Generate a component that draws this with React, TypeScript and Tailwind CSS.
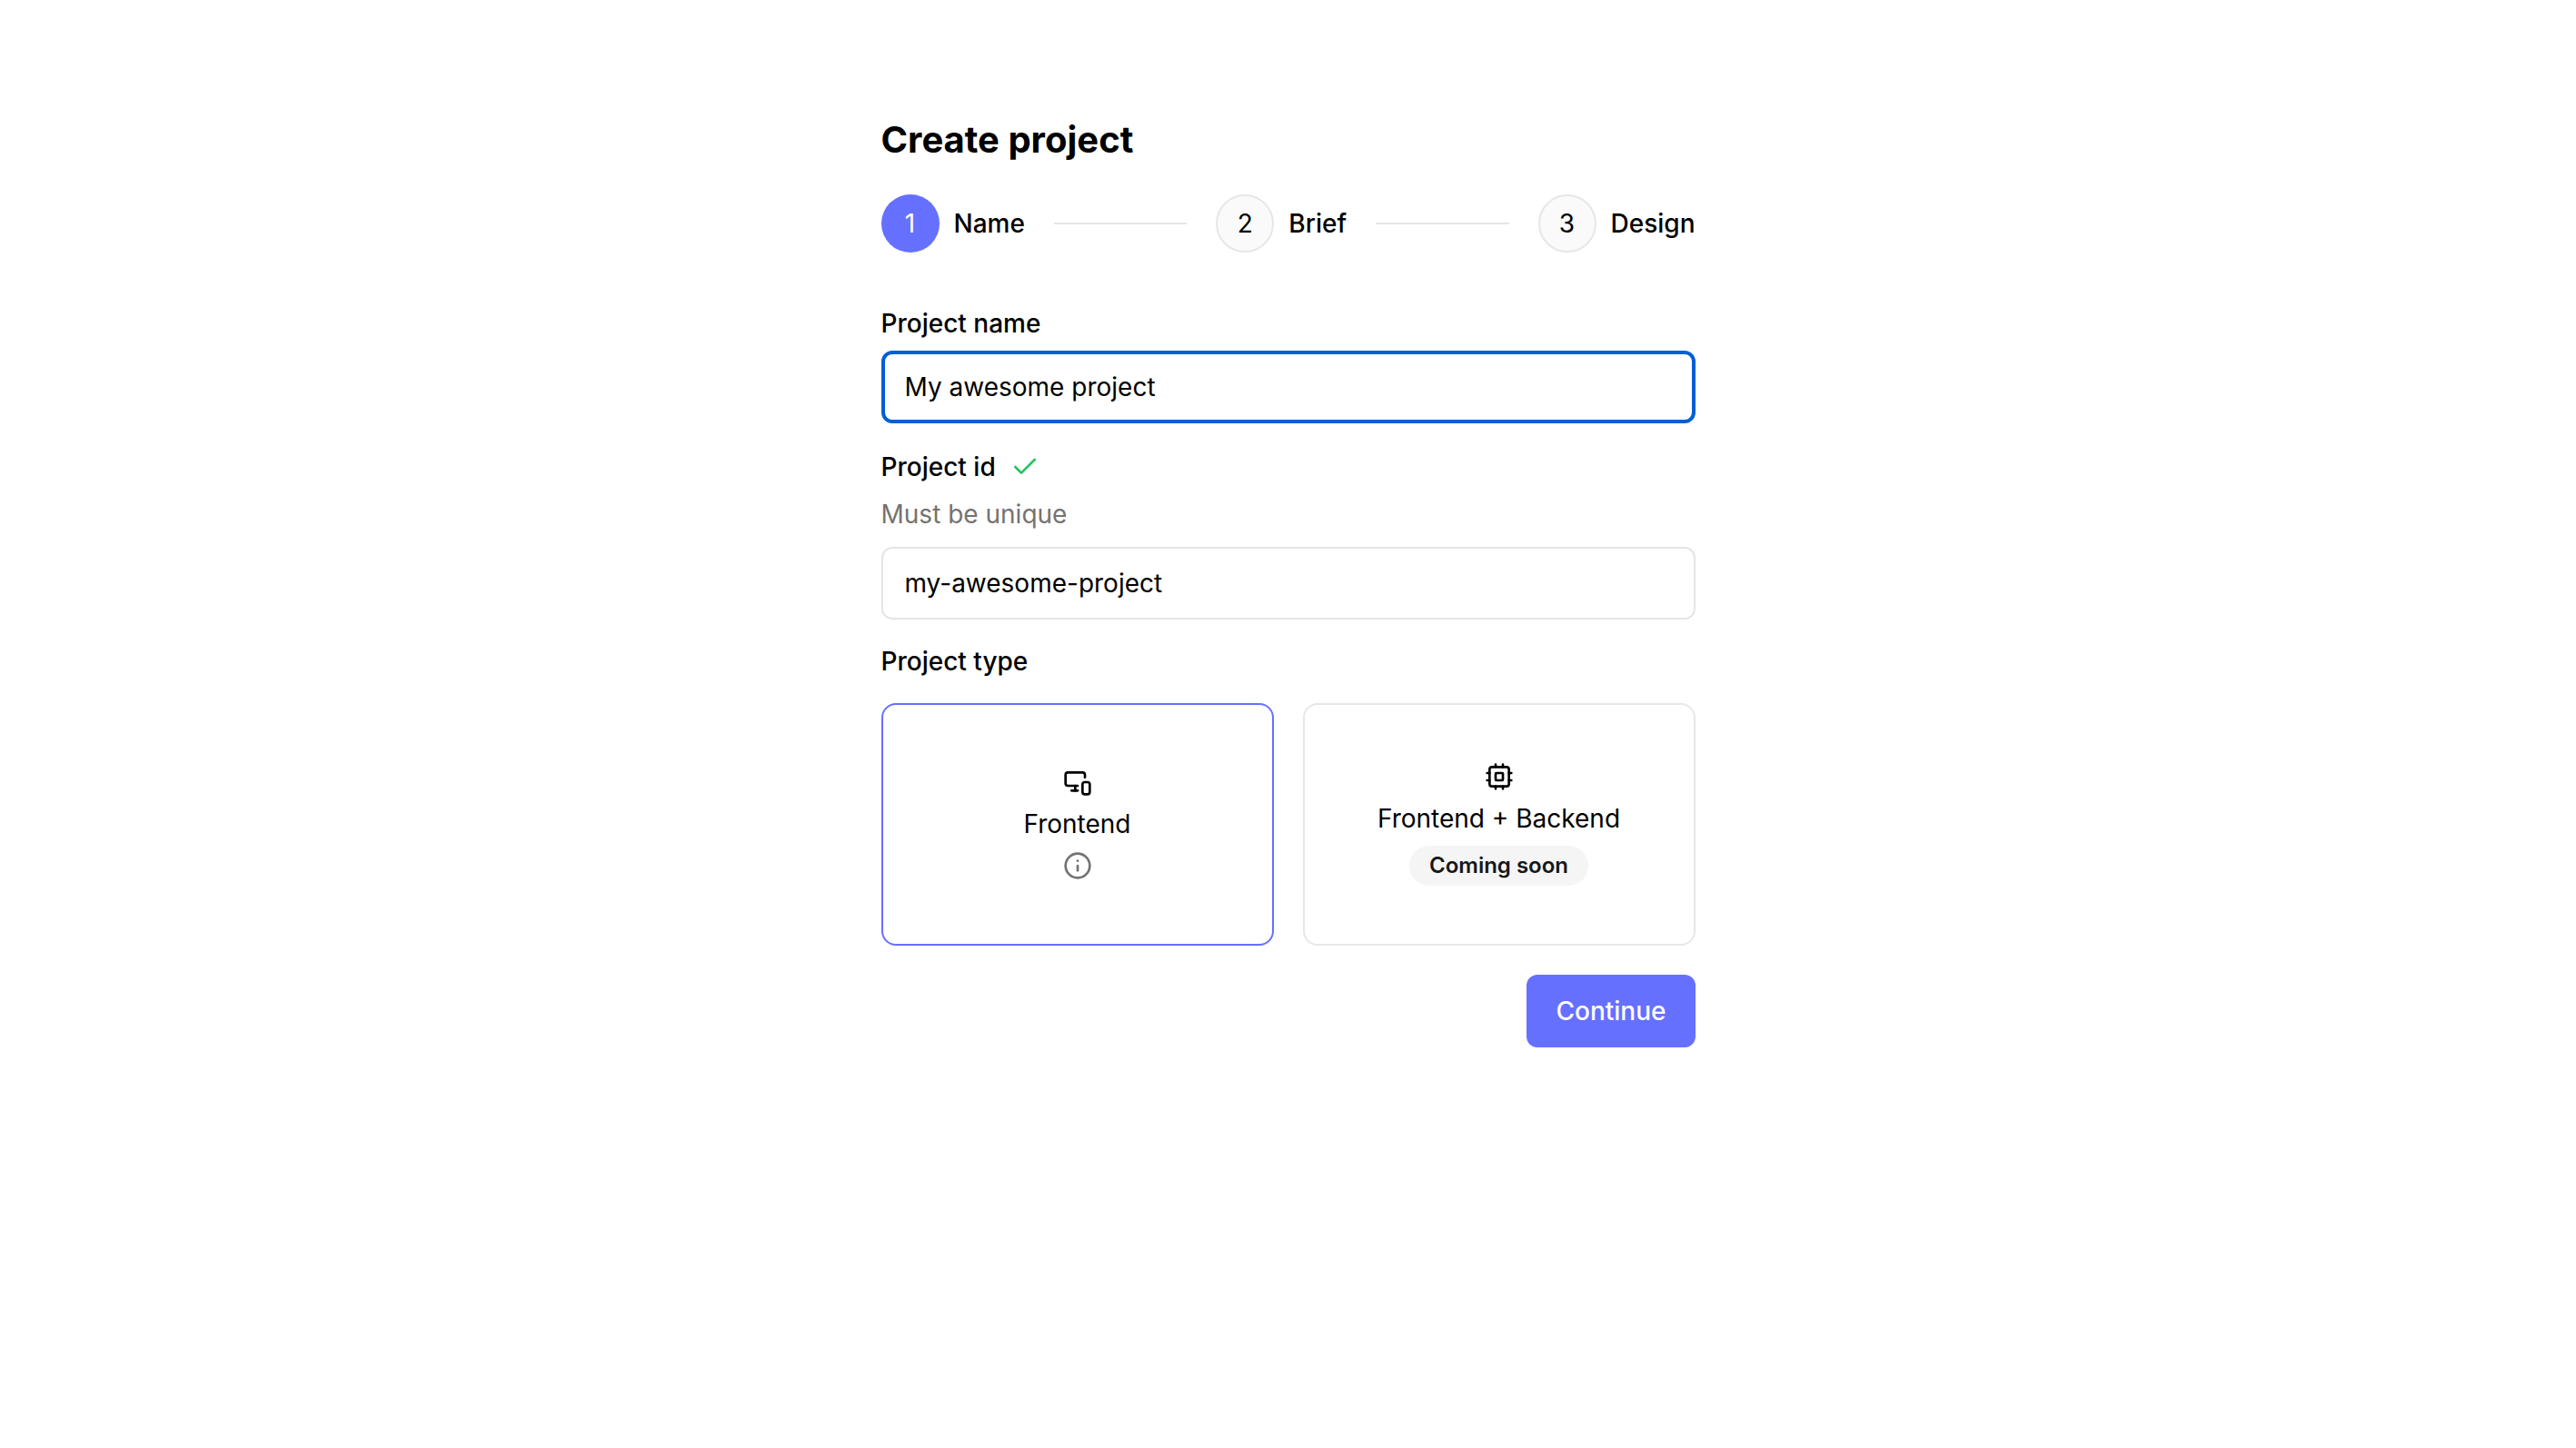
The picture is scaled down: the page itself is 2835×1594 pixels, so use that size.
import { useState } from "react";
import { Check, Info, MonitorSmartphone } from "lucide-react";

const steps = ["Name", "Brief", "Design"];

function CpuIcon() {
    return (
        <svg
            viewBox="0 0 24 24"
            fill="none"
            stroke="currentColor"
            strokeWidth="2"
            strokeLinecap="round"
            strokeLinejoin="round"
            aria-hidden="true"
            className="size-8"
        >
            <rect x="4" y="4" width="16" height="16" rx="2" />
            <rect x="9" y="9" width="6" height="6" rx="0.5" />
            <path d="M15 2v2M15 20v2M2 15h2M2 9h2M20 15h2M20 9h2M9 2v2M9 20v2" />
        </svg>
    );
}

function Step({ index, label, active }: { index: number; label: string; active: boolean }) {
    return (
        <li className="flex items-center gap-4" aria-current={active ? "step" : undefined}>
            <span
                className={`flex size-16 items-center justify-center rounded-full font-normal ${
                    active ? "bg-[#6670ff] text-white" : "border-2 border-gray-200 bg-neutral-50"
                }`}
            >
                {index}
            </span>
            <span>{label}</span>
        </li>
    );
}

function TypeCard({
    value,
    selected,
    onSelect,
    disabled,
    children,
}: {
    value: string;
    selected: boolean;
    onSelect: (value: string) => void;
    disabled?: boolean;
    children: React.ReactNode;
}) {
    return (
        <label
            className={`relative flex min-h-[267px] flex-1 flex-col items-center justify-center gap-2.5 rounded-2xl border-2 pb-0.5 font-normal leading-10 ${
                selected ? "border-[#6670ff]" : "border-gray-200"
            }`}
        >
            <input
                type="radio"
                name="projectType"
                value={value}
                checked={selected}
                disabled={disabled}
                onChange={() => onSelect(value)}
                className="sr-only"
            />
            {children}
        </label>
    );
}

export default function App() {
    const [name, setName] = useState("My awesome project");
    const [projectId, setProjectId] = useState("my-awesome-project");
    const [type, setType] = useState("frontend");

    return (
        <main className="min-h-screen bg-white px-8 py-[126px] font-['Inter',sans-serif] text-[28px] font-medium leading-10 text-black [font-optical-sizing:none]">
            <form className="mx-auto max-w-4xl" onSubmit={(e) => e.preventDefault()}>
                <h1 className="text-[40px] font-bold leading-14">Create project</h1>

                {/* Stepper */}
                <ol className="mt-8 flex items-center gap-8">
                    <Step index={1} label={steps[0]} active />
                    <li aria-hidden="true" className="h-0.5 flex-1 bg-neutral-200" />
                    <Step index={2} label={steps[1]} active={false} />
                    <li aria-hidden="true" className="h-0.5 flex-1 bg-neutral-200" />
                    <Step index={3} label={steps[2]} active={false} />
                </ol>

                <div className="mt-16 flex flex-col gap-8">
                    <div className="flex flex-col gap-4">
                        <label htmlFor="name" className="leading-7">
                            Project name
                        </label>
                        <input
                            id="name"
                            value={name}
                            onChange={(e) => setName(e.target.value)}
                            className="h-20 w-full rounded-xl border-4 border-[#005fd4] px-[22px] font-normal outline-none"
                        />
                    </div>

                    <div className="flex flex-col gap-4">
                        <div className="flex items-center gap-4">
                            <label htmlFor="projectId" className="leading-7">
                                Project id
                            </label>
                            <Check className="size-8 text-[#22c55e]" />
                        </div>
                        <p className="font-normal text-neutral-500">Must be unique</p>
                        <input
                            id="projectId"
                            value={projectId}
                            onChange={(e) => setProjectId(e.target.value)}
                            className="h-20 w-full rounded-xl border-2 border-neutral-200 px-6 font-normal outline-none"
                        />
                    </div>

                    {/* Project type */}
                    <div role="radiogroup" aria-labelledby="typeLabel" className="flex flex-col gap-8">
                        <span id="typeLabel" className="leading-7">
                            Project type
                        </span>
                        <div className="flex gap-8">
                            <TypeCard value="frontend" selected={type === "frontend"} onSelect={setType}>
                                <MonitorSmartphone className="size-8" />
                                <span>Frontend</span>
                                <button type="button" aria-label="About frontend projects" className="text-neutral-500">
                                    <Info className="size-8" />
                                </button>
                            </TypeCard>
                            <TypeCard value="fullstack" selected={type === "fullstack"} onSelect={setType} disabled>
                                <CpuIcon />
                                <span>Frontend + Backend</span>
                                <span className="rounded-full bg-neutral-100 px-[22px] py-1.5 text-2xl font-semibold leading-8 text-neutral-900">
                                    Coming soon
                                </span>
                            </TypeCard>
                        </div>
                    </div>

                    <button type="submit" className="h-20 self-end rounded-xl bg-[#6670ff] px-8 text-white">
                        Continue
                    </button>
                </div>
            </form>
        </main>
    );
}
